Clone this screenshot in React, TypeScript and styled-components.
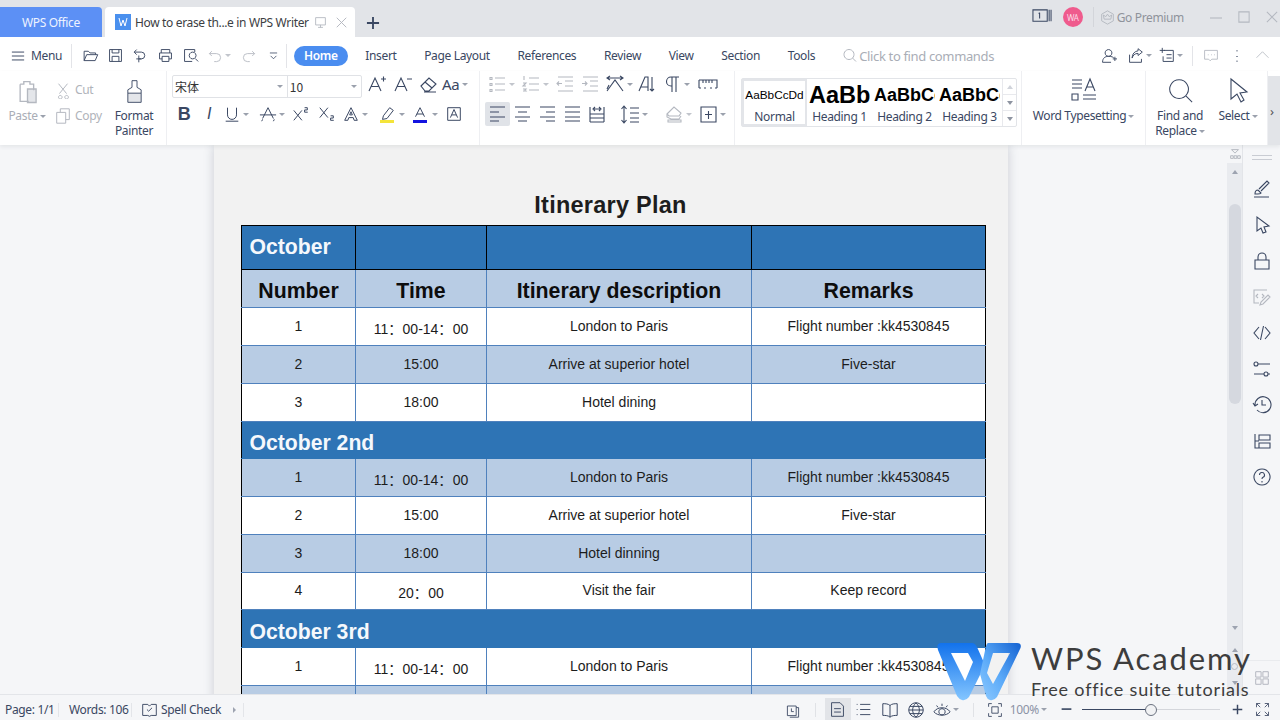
import React from "react";
import styled, { createGlobalStyle } from "styled-components";

const UI = `"Noto Sans", "Open Sans", sans-serif`;
const CJK = `"Noto Sans CJK SC", "Noto Sans", sans-serif`;
const NAVY = "#3a4762";
const MUTED = "#b4b8c0";

const GlobalStyle = createGlobalStyle`
  html, body { margin: 0; padding: 0; height: 100%; overflow: hidden; background: #f5f6f8; }
  #root { height: 100%; }
`;

const Shell = styled.div`
  position: relative;
  width: 1280px;
  height: 720px;
  overflow: hidden;
  display: flex;
  flex-direction: column;
  font: 12px ${UI};
  letter-spacing: -0.35px;
  color: ${NAVY};
`;

/* ---------- icons ---------- */

const Glyph = styled.svg<{ $muted?: boolean; $w: number; $h: number; $sw?: number }>`
  width: ${(p) => p.$w}px;
  height: ${(p) => p.$h}px;
  flex: none;
  fill: none;
  stroke: ${(p) => (p.$muted ? MUTED : NAVY)};
  stroke-width: ${(p) => p.$sw ?? 1.1};
`;

const Ico = ({ d, size = 20, box = 20, muted, sw, tint }: { d: string; size?: number; box?: number; muted?: boolean; sw?: number; tint?: string }) => (
  <Glyph viewBox={`0 0 ${box} ${box}`} $w={size} $h={size} $muted={muted} $sw={sw}>
    {tint && <path d={tint} fill="#e4e6ea" stroke="none" />}
    <path d={d} />
  </Glyph>
);

const Caret = styled.span<{ $light?: boolean; $inline?: boolean }>`
  flex: none;
  display: ${(p) => (p.$inline ? "inline-block" : "block")};
  vertical-align: 2px;
  width: 0;
  height: 0;
  margin-left: 2px;
  border-left: 3px solid transparent;
  border-right: 3px solid transparent;
  border-top: 3px solid ${(p) => (p.$light ? "#c2c5cc" : "#9ba1ad")};
`;

const Spacer = styled.span<{ $w: number }>`
  flex: none;
  width: ${(p) => p.$w}px;
`;

const P = {
  menu: "M1 3.500h14M1 8h14M1 12.500h14",
  open: "M2.500 16V5h5l2 2h6.500v2M2.500 16h13l3-7h-13z",
  save: "M3 3h14v14H3zM6 3v4h8V3M6 17v-6h8v6",
  send: "M3 6h8a4 4 0 0 1 0 8H8M5.500 3 2.500 6l3 3M8 10v8M5 14h6",
  print: "M5 7V3h10v4M6 14H3V7h14v7h-3M6 11h8v6H6z",
  preview: "M15 6V3H3v14h9M12.500 6a4 4 0 1 0 .01 0M15.500 13.500 19 17",
  undo: "M6 4 3 7l3 3M3 7h9a5 5 0 0 1 0 10H9",
  redo: "M14 4l3 3-3 3M17 7H8a5 5 0 0 0 0 10h3",
  qat: "M4 5.500h10M5 9.500l4 4 4-4",
  paste: "M5 5h3V3h5v2h3v5M5 5v14h7M11 9h7v11h-7z",
  cut: "M5 3l9 11M15 3 6 14M7 16a2 2 0 1 1-.01 0M14 16a2 2 0 1 1-.01 0",
  copy: "M7 6V2h10v12h-4M3 6h10v12H3z",
  brush: "M12 2h6v8l5 3v4H7v-4l5-3zM7 17v11h16V17",
  grow: "M2 17 8 4l6 13M4.500 12.500h7M14 5h5M16.500 2.500v5",
  shrink: "M2 17 8 4l6 13M4.500 12.500h7M14 5h5",
  eraser: "M3 12 11 4l7 6-7 7H7zM7 8l7 6M6 18h12",
  underline: "M5 3v8a5 5 0 0 0 10 0V3M3 18h14",
  strike: "M4 15 10 3l6 12M1 11h18M3 18l1-2M16 18l1-2",
  sup: "M2 6l9 11M11 6l-9 11M14 3h3v2.500h-3V8h3.500",
  sub: "M2 3l9 11M11 3l-9 11M14 12h3v2.500h-3V17h3.500",
  outline: "M3 17 10 3l7 14h-3.500l-1-3h-5l-1 3zM8.500 11h3L10 7.500z",
  highlight: "M6 12 13 3l4 3-7 9-5 1z",
  fontColor: "M5 13 10 3l5 10M6.500 10h7",
  boxA: "M3 3h14v14H3zM6 14l4-9 4 9M7.500 11h5",
  bullets: "M8 4h10M8 10h10M8 16h10M3 3.500h2v2H3zM3 9.500h2v2H3zM3 15.500h2v2H3z",
  numbers: "M8 4h10M8 10h10M8 16h10M3 2v4M2 9h3l-3 3h3M2 15h3l-1 1 1 1H2",
  outdent: "M3 3h15M10 7h8M10 12h8M3 17h15M7 9.500H2M4 7.500l-2 2 2 2",
  indent: "M3 3h15M10 7h8M10 12h8M3 17h15M2 9.500h5M5 7.500l2 2-2 2",
  asian: "M2 17 10 6l8 11M4 11l-2 4M2 4h16M5 2 2 4l3 2M15 2l3 2-3 2",
  sort: "M2 17 8 3h3v14M4 13h7M15 3v14M13 15l2 2 2-2",
  pilcrow: "M14 3v15M10 3v15M17 3H9a4 4 0 0 0 0 9h1",
  ruler: "M1 6h18v8M1 6v8M1 14h2M6 14h2M12 14h2M17 14h2M5 6v3M8 6v3M11 6v3M14 6v3",
  alignL: "M3 3h15M3 8h9M3 13h15M3 17h9",
  alignC: "M3 3h15M6 8h9M3 13h15M6 17h9",
  alignR: "M3 3h15M9 8h9M3 13h15M9 17h9",
  justify: "M3 3h15M3 8h15M3 13h15M3 17h15",
  distribute: "M3 3v15M17 3v15M3 10h14M3 14h14M3 18h14M7 5h6M8 3 6 5l2 2M12 3l2 2-2 2",
  spacing: "M10 4h9M10 9h9M10 14h9M10 18h9M4 2v17M1.500 5 4 2l2.500 3M1.500 16 4 19l2.500-3",
  shading: "M3 10 10 3l7 6-2 3H5zM3 10v3l4 2h8l2-3M4 16h13v2H4z",
  borders: "M3 3h15v15H3zM10.500 7v8M7 10.500h7",
  typeset: "M2 3h10M2 7h10M2 11h10M15 14l5-12 5 12M16.500 10h7M2 17h6v6H2zM13 18h13M13 22h13",
  find: "M14 3a10 10 0 1 0 .01 0M21 20l7 7",
  pointer: "M7 2v20l6-5 4 8 3-2-4-7 7-1z",
  person: "M10 3a4 4 0 1 0 .01 0M3 18c0-5 3-7 7-7s6 1 6 2M3 18h10M15 14h5M17.500 11.500v5",
  share: "M3 9v9h14v-4M13 2l5 4-5 4V7.500C9 7.500 7 10 6 13c0-5 3-8 7-8.500z",
  addNote: "M7 4h11v13H6v-6M2 4h6M5 1v6M10 9h6M10 13h6",
  chat: "M2 3h16v11h-7l-2 2-2-2H2zM6 8.500h1M10 8.500h1M14 8.500h1",
  dots: "M10 3v1M10 10v1M10 16v1",
  up: "M2 13 10 5l8 8",
  minWin: "M1 8h12",
  maxWin: "M2 2h11v11H2z",
  close: "M2 2l11 11M13 2 2 13",
  plus: "M7.500 1v13M1 7.500h13",
  monitor: "M2 2h12v9H2zM8 11v3M5 14h6",
  premium: "M9 1l7 4v8l-7 4-7-4V5zM5 11h8l1-5-3 2-2-3-2 3-3-2z",
  counter: "M1 3h15v12H1zM8 6v6M7 7l1-1M18 3v12M20 3v12",
  pen: "M2 18h15M3 15c0-2 1-4 3-4l3 3c0 1-3 1-6 1zM7 10l8-8 2 2-8 8",
  cursor: "M5 2v14l4-3 2 5 3-1-2-5 5-1z",
  lock: "M3 9h14v9H3zM6 9V6a4 4 0 0 1 8 0v3",
  code: "M7 4 2 10l5 6M13 4l5 6-5 6M11.500 3l-3 14",
  edit: "M15 3H2v13h5M6 7 4 9l2 2M10 7l2 2-2 2M8 18l1-3 7-7 2 2-7 7z",
  sliders: "M2 5a2 2 0 1 0 4 0 2 2 0 1 0-4 0M6 5h12M2 15h10M12 15a2 2 0 1 0 4 0 2 2 0 1 0-4 0M16 15h2",
  history: "M3 10a8 8 0 1 1 2 5M1 8l2 3 3-2M10 5v5h4",
  outline2: "M3 3v14h4M3 10h4M7 4h11v5H7zM7 12h11v5H7z",
  help: "M10 2a8 8 0 1 0 .01 0M7.500 8a2.500 2.500 0 1 1 3.500 2.300c-.7.3-1 .7-1 1.700M10 14v1.500",
  grid: "M3 3h6v6H3zM11 3h6v6h-6zM3 11h6v6H3zM11 11h6v6h-6z",
  spell: "M2 4h6l2 2 2-2h6v13h-6l-2 1-2-1H2zM7 10l2 2 4-4",
  clock: "M3 5h11v12H3zM14 7h3v12H6M8 8v4h3",
  pageView: "M3 2h10l4 4v12H3zM6 9h8M6 13h8",
  listView: "M6 4h12M6 10h12M6 16h12M2 4h1M2 10h1M2 16h1",
  book: "M10 5c-2-2-5-2-8-2v13c3 0 6 0 8 2 2-2 5-2 8-2V3c-3 0-6 0-8 2zM10 5v13",
  globe: "M10 2a8 8 0 1 0 .01 0M2 10h16M3 6h14M3 14h14M10 2c-5 5-5 11 0 16M10 2c5 5 5 11 0 16",
  eye: "M1 12c4-6 14-6 18 0-4 5-14 5-18 0zM10 8.500a3.500 3.500 0 1 0 .01 0M4 5l1.500 2M10 3v2.500M16 5l-1.500 2",
  fit: "M2 6V2h4M14 2h4v4M18 14v4h-4M6 18H2v-4M6 6h8v8H6z",
  minus: "M2 7.500h12",
  full: "M2 7V2h5M2 2l5 5M13 2h5v5M18 2l-5 5M18 13v5h-5M18 18l-5-5M7 18H2v-5M2 18l5-5",
  rulerToggle: "M4 3h8L8 7zM3 10h3v3H3zM7 10h3v3H7zM11 10h3v3h-3z",
};

/* ---------- title bar ---------- */

const TitleBar = styled.header`
  height: 37px;
  flex: none;
  background: #e2e4e8;
  display: flex;
  align-items: flex-end;
`;

const HomeTab = styled.div`
  width: 102px;
  height: 30px;
  background: #5c90f5;
  border-radius: 0 4px 0 0;
  color: #eef3ff;
  display: flex;
  align-items: center;
  justify-content: center;
`;

const DocTab = styled.div`
  width: 250px;
  height: 30px;
  margin-left: 3px;
  padding: 0 10px;
  box-sizing: border-box;
  background: #fff;
  border-radius: 4px 4px 0 0;
  display: flex;
  align-items: center;
  color: #3c4043;
`;

const DocBadge = styled.svg`
  width: 16px;
  height: 16px;
  flex: none;
`;

const DocTitle = styled.span`
  margin: 0 5px 0 4px;
  white-space: nowrap;
`;

const NewTab = styled.div`
  margin: 0 0 7px 11px;
  display: flex;
`;

const TitleRight = styled.div`
  margin: 0 0 0 auto;
  height: 37px;
  padding: 0 1px 3px 0;
  box-sizing: border-box;
  display: flex;
  align-items: center;
`;

const Avatar = styled.div`
  width: 20px;
  height: 20px;
  margin: 0 10px 0 11px;
  border-radius: 50%;
  background: #ef5b8d;
  color: #fbdce6;
  font-size: 8px;
  display: flex;
  align-items: center;
  justify-content: center;
`;

const Premium = styled.div`
  border-left: 1px solid #d3d5da;
  height: 20px;
  padding-left: 6px;
  display: flex;
  align-items: center;
  gap: 2px;
  color: #8f939b;
  margin-right: 25px;
`;

const WinButtons = styled.div`
  display: flex;
  gap: 14px;
`;

/* ---------- menu row ---------- */

const MenuRow = styled.nav`
  height: 34px;
  flex: none;
  padding-top: 3px;
  box-sizing: border-box;
  background: #fff;
  display: flex;
  align-items: center;
`;

const MenuButton = styled.div`
  width: 72px;
  height: 24px;
  padding-left: 11px;
  box-sizing: border-box;
  border-right: 1px solid #e3e4e8;
  display: flex;
  align-items: center;
  gap: 6px;
`;

const Quick = styled.div`
  width: 215px;
  height: 24px;
  padding-left: 10px;
  box-sizing: border-box;
  border-right: 1px solid #e3e4e8;
  display: flex;
  align-items: center;
`;

const QuickSlot = styled.div<{ $w: number }>`
  width: ${(p) => p.$w}px;
  display: flex;
  align-items: center;
`;

const RibbonTabs = styled.div`
  margin-left: 7px;
  display: flex;
  align-items: center;
  gap: 27.7px;
`;

const RibbonTab = styled.div<{ $active?: boolean }>`
  height: 20px;
  line-height: 20px;
  white-space: nowrap;
  ${(p) =>
    p.$active &&
    `padding: 0 10px;
     margin-right: -10px;
     border-radius: 10px;
     background: #4a8df0;
     color: #fff;
     font-weight: 600;`}
`;

const FindCommands = styled.div`
  margin-left: 27px;
  display: flex;
  align-items: center;
  gap: 2px;
  color: #a9adb6;
  font-size: 13px;
`;

const MenuRight = styled.div`
  margin-left: auto;
  padding-right: 10px;
  display: flex;
  align-items: center;
`;

const MenuDivider = styled.div`
  width: 1px;
  height: 20px;
  background: #e3e4e8;
  margin: 0 10px 0 9px;
`;

/* ---------- ribbon ---------- */

const Ribbon = styled.section`
  height: 74px;
  flex: none;
  background: #fff;
  display: flex;
  position: relative;
  z-index: 2;
  box-shadow: 0 2px 4px rgba(40, 50, 70, 0.08);
`;

const Group = styled.div<{ $w: number; $pad?: number }>`
  width: ${(p) => p.$w}px;
  flex: none;
  box-sizing: border-box;
  padding-left: ${(p) => p.$pad ?? 0}px;
  border-right: 1px solid #eeeff2;
  display: flex;
`;

const Big = styled.div<{ $w: number; $muted?: boolean }>`
  width: ${(p) => p.$w}px;
  flex: none;
  padding-top: 5px;
  display: flex;
  flex-direction: column;
  align-items: center;
  color: ${(p) => (p.$muted ? "#a9adb6" : NAVY)};
`;

const BigIcon = styled.div`
  height: 30px;
  display: flex;
  align-items: center;
  margin-bottom: 2px;
`;

const BigLabel = styled.div`
  line-height: 15px;
  text-align: center;
  white-space: nowrap;
`;

const SmallStack = styled.div`
  width: 58px;
  margin-left: 7px;
  padding-top: 9px;
  display: flex;
  flex-direction: column;
  gap: 7px;
  color: #b0b3ba;
`;

const SmallTool = styled.div`
  display: flex;
  align-items: center;
  gap: 3px;
  height: 19px;
`;

const Rows = styled.div`
  display: flex;
  flex-direction: column;
`;

const ToolRow = styled.div<{ $second?: boolean }>`
  height: 26px;
  margin-top: ${(p) => (p.$second ? 4 : 0)}px;
  display: flex;
  align-items: center;
`;

const Tool = styled.div<{ $w: number; $active?: boolean }>`
  width: ${(p) => p.$w}px;
  height: 24px;
  flex: none;
  padding-left: 2px;
  box-sizing: border-box;
  border-radius: 2px;
  background: ${(p) => (p.$active ? "#e0e3e8" : "transparent")};
  display: flex;
  align-items: center;
`;

const FontBox = styled.div`
  margin: 4px 3px 0 0;
  width: 190px;
  height: 23px;
  border: 1px solid #e0e2e6;
  border-radius: 2px;
  box-sizing: border-box;
  display: flex;
  font-family: ${CJK};
  letter-spacing: 0;
  color: #333;
`;

const FontField = styled.div<{ $w: number }>`
  width: ${(p) => p.$w}px;
  box-sizing: border-box;
  padding: 0 4px 0 2px;
  display: flex;
  align-items: center;
  justify-content: space-between;
  & + & { border-left: 1px solid #e0e2e6; }
`;

const BoldGlyph = styled.span<{ $italic?: boolean }>`
  width: 20px;
  text-align: center;
  font: ${(p) => (p.$italic ? "italic 400 16px" : "700 18px")} "Liberation Sans", sans-serif;
  line-height: 20px;
`;

const CaseGlyph = styled.span`
  font-size: 15px;
  line-height: 20px;
  margin-right: 1px;
`;

const BarIcon = styled.div<{ $color: string }>`
  display: flex;
  flex-direction: column;
  align-items: center;
  width: 20px;
  &::after {
    content: "";
    width: 14px;
    height: 3px;
    margin-top: -3px;
    background: ${(p) => p.$color};
  }
`;

const Gallery = styled.div`
  margin-top: 7px;
  width: 276px;
  height: 49px;
  box-sizing: border-box;
  border: 1px solid #e2e4e8;
  border-radius: 2px;
  display: flex;
`;

const StyleCard = styled.div<{ $selected?: boolean }>`
  width: 65px;
  flex: none;
  box-sizing: border-box;
  border: 2px solid ${(p) => (p.$selected ? "#e3e5e9" : "transparent")};
  display: flex;
  flex-direction: column;
  align-items: center;
  overflow: hidden;
`;

const StylePreview = styled.div<{ $size: number; $bold?: boolean }>`
  width: 100%;
  height: 28px;
  line-height: 28px;
  text-align: center;
  overflow: hidden;
  white-space: nowrap;
  letter-spacing: 0;
  color: #000;
  font-family: "Liberation Sans", sans-serif;
  font-size: ${(p) => p.$size}px;
  font-weight: ${(p) => (p.$bold ? 700 : 400)};
`;

const StyleName = styled.div`
  line-height: 15px;
`;

const GalleryArrows = styled.div`
  width: 15px;
  margin-left: auto;
  border-left: 1px solid #e8e9ed;
  display: flex;
  flex-direction: column;
`;

const GalleryArrow = styled.div<{ $up?: boolean; $light?: boolean }>`
  flex: 1;
  display: flex;
  align-items: center;
  justify-content: center;
  & + & { border-top: 1px solid #e8e9ed; }
  &::after {
    content: "";
    border-left: 3px solid transparent;
    border-right: 3px solid transparent;
    ${(p) => (p.$up ? "border-bottom" : "border-top")}: 4px solid ${(p) => (p.$light ? "#d0d3da" : "#8e94a1")};
  }
`;

const Collapse = styled.div`
  flex: 1;
  margin-top: 5px;
  background: #e2e4e8;
  display: flex;
  align-items: center;
  padding-left: 2px;
  color: #555;
  font-size: 13px;
`;

/* ---------- document ---------- */

const Workspace = styled.main`
  flex: 1;
  min-height: 0;
  display: flex;
  background: #f5f6f8;
`;

const Canvas = styled.div`
  width: 1227px;
  flex: none;
  padding-left: 214px;
  box-sizing: border-box;
  overflow: hidden;
`;

const Page = styled.article`
  width: 794px;
  min-height: 700px;
  box-sizing: border-box;
  padding: 47px 22px 0 27px;
  background: #f2f2f2;
  box-shadow: 0 0 10px rgba(60, 70, 90, 0.22);
`;

const DocHeading = styled.h1`
  margin: 0 0 6px;
  padding-right: 6px;
  height: 27px;
  text-align: center;
  font: 700 23.500px/27px "Liberation Sans", sans-serif;
  color: #1d1d1d;
  letter-spacing: 0.25px;
`;

const Sheet = styled.table`
  width: 744px;
  table-layout: fixed;
  border-collapse: collapse;
  font-family: "Liberation Sans", sans-serif;
  letter-spacing: 0;
  color: #1c1c1c;
`;

const Row = styled.tr<{ $h: number }>`
  height: ${(p) => p.$h}px;
`;

const Cell = styled.td<{ $band?: boolean; $low?: boolean }>`
  padding: ${(p) => (p.$low ? "4px 0 0" : "0 0 2px")};
  box-sizing: border-box;
  text-align: center;
  font-size: 14px;
  line-height: 16px;
  background: ${(p) => (p.$band ? "#b8cce4" : "#fff")};
  border: 1px solid #4f81bd;
  white-space: nowrap;
  &:first-child { border-left: 1.500px solid #000; }
  &:last-child { border-right: 1.500px solid #000; }
`;

const HeadCell = styled.th`
  padding: 5px 0 0;
  text-align: center;
  font-size: 21.300px;
  line-height: 24px;
  font-weight: 700;
  color: #0d0d0d;
  background: #b8cce4;
  border: 1px solid #4f81bd;
  &:first-child { border-left: 1.500px solid #000; }
  &:last-child { border-right: 1.500px solid #000; }
`;

const MonthCell = styled.td<{ $framed?: boolean }>`
  padding: ${(p) => (p.$framed ? "0 0 2px 7.500px" : "6px 0 0 7.500px")};
  font-size: 21.200px;
  line-height: 24px;
  font-weight: 700;
  color: #f5f8fc;
  background: #2e74b5;
  border: 1px solid ${(p) => (p.$framed ? "#000" : "#2e74b5")};
  &:first-child { border-left: 1.500px solid #000; }
  &:last-child { border-right: 1.500px solid #000; }
`;

const TimeText = styled.span`
  font-family: "Liberation Sans", ${CJK};
  word-spacing: -3.500px;
`;

/* ---------- scrollbar + side rail ---------- */

const Scrollbar = styled.div`
  width: 15px;
  flex: none;
  display: flex;
  flex-direction: column;
  align-items: center;
`;

const RulerToggle = styled.div`
  height: 18px;
  display: flex;
  align-items: center;
  justify-content: center;
  width: 100%;
  background: #f5f6f8;
`;

const Track = styled.div`
  flex: 1;
  width: 100%;
  background: #e9ebef;
  display: flex;
  flex-direction: column;
  align-items: center;
`;

const Thumb = styled.div`
  width: 12px;
  height: 200px;
  margin-top: 30px;
  border-radius: 6px;
  background: #d5d8df;
`;

const Tri = styled.div<{ $up?: boolean }>`
  margin-top: ${(p) => (p.$up ? 7 : 0)}px;
  border-left: 3px solid transparent;
  border-right: 3px solid transparent;
  ${(p) => (p.$up ? "border-bottom" : "border-top")}: 4px solid #9da3b0;
`;

const TrackFoot = styled.div`
  margin-top: auto;
  padding-bottom: 9px;
  display: flex;
  flex-direction: column;
  align-items: center;
  gap: 11px;
`;

const DotButton = styled.div`
  width: 5px;
  height: 5px;
  border: 1px solid #b8bcc6;
  border-radius: 50%;
`;

const SideRail = styled.aside`
  flex: 1;
  border-left: 1px solid #e3e5e9;
  display: flex;
  flex-direction: column;
  align-items: center;
  padding-top: 10px;
  box-sizing: border-box;
`;

const RailGrip = styled.div`
  width: 20px;
  height: 3px;
  border-top: 1px solid #c9ccd3;
  border-bottom: 1px solid #c9ccd3;
  margin-bottom: 19px;
`;

const RailIcons = styled.div`
  display: flex;
  flex-direction: column;
  gap: 16px;
`;

const RailFoot = styled.div`
  margin-top: auto;
  margin-bottom: 7px;
  padding-top: 8px;
  border-top: 1px solid #e9ebee;
  width: 100%;
  display: flex;
  justify-content: center;
`;

/* ---------- status bar ---------- */

const StatusBar = styled.footer`
  height: 26px;
  flex: none;
  padding-top: 4px;
  background: #f5f6f8;
  border-top: 1px solid #e3e5e9;
  box-sizing: border-box;
  display: flex;
  align-items: center;
  position: relative;
  z-index: 2;
`;

const StatusText = styled.div<{ $w: number; $pad?: number }>`
  width: ${(p) => p.$w}px;
  height: 14px;
  line-height: 14px;
  box-sizing: border-box;
  padding-left: ${(p) => p.$pad ?? 5}px;
  border-right: 1px solid #e3e5e9;
  white-space: nowrap;
`;

const SpellCheck = styled.div`
  width: 112px;
  height: 14px;
  padding-left: 9px;
  box-sizing: border-box;
  border-right: 1px solid #e3e5e9;
  display: flex;
  align-items: center;
  gap: 3px;
`;

const MiniArrow = styled.span`
  margin-left: 9px;
  border-top: 3px solid transparent;
  border-bottom: 3px solid transparent;
  border-left: 3px solid #9da3b0;
`;

const StatusRight = styled.div`
  margin-left: auto;
  padding-right: 10px;
  display: flex;
  align-items: center;
`;

const ViewBtn = styled.div<{ $on?: boolean; $w?: number }>`
  width: ${(p) => p.$w ?? 26}px;
  height: 23px;
  display: flex;
  align-items: center;
  justify-content: center;
  background: ${(p) => (p.$on ? "#e2e4e8" : "transparent")};
`;

const StatusDivider = styled.div`
  width: 1px;
  height: 14px;
  background: #e0e2e6;
  margin: 0 9px;
`;

const Zoom = styled.div`
  color: #8b93a5;
  display: flex;
  align-items: center;
  margin: 0 13px 0 2px;
`;

const Slider = styled.div`
  position: relative;
  width: 138px;
  height: 1px;
  margin: 0 12px 0 9px;
  background: linear-gradient(to right, ${NAVY} 50%, #d4d6db 50%);
`;

const SliderKnob = styled.span`
  position: absolute;
  left: 63px;
  top: -5px;
  width: 10px;
  height: 10px;
  border: 1px solid #6b7280;
  border-radius: 50%;
  background: #f1f2f4;
`;

/* ---------- watermark ---------- */

const Watermark = styled.div`
  position: absolute;
  left: 937px;
  top: 643px;
  z-index: 5;
  display: flex;
  pointer-events: none;
`;

const WmText = styled.div`
  margin-left: 10px;
  padding-top: 1px;
  color: #3d3d3d;
  font-family: Lato, sans-serif;
`;

const WmTitle = styled.div`
  font-size: 31px;
  line-height: 28px;
  letter-spacing: 1.900px;
  white-space: nowrap;
`;

const WmSub = styled.div`
  margin-top: 6px;
  font-size: 18px;
  line-height: 22px;
  letter-spacing: 0.820px;
  white-space: nowrap;
`;

/* ---------- data ---------- */

type Plan = [string, string, string, string];

const AM = "11： 00-14： 00";

const FIRST: Plan[] = [
  ["1", AM, "London to Paris", "Flight number :kk4530845"],
  ["2", "15:00", "Arrive at superior hotel", "Five-star"],
  ["3", "18:00", "Hotel dining", ""],
];

const SECOND: Plan[] = [
  ["1", AM, "London to Paris", "Flight number :kk4530845"],
  ["2", "15:00", "Arrive at superior hotel", "Five-star"],
  ["3", "18:00", "Hotel dinning", ""],
  ["4", "20： 00", "Visit the fair", "Keep record"],
];

const THIRD: Plan[] = [
  ["1", AM, "London to Paris", "Flight number :kk4530845"],
  ["2", "15:00", "Arrive at superior hotel", "Five-star"],
];

const PlanRows = ({ plans, firstBand }: { plans: Plan[]; firstBand: boolean }) => (
  <>
    {plans.map((p, i) => {
      const band = (i % 2 === 0) === firstBand;
      return (
        <Row $h={i === 3 ? 37 : 38} key={i}>
          <Cell $band={band}>{p[0]}</Cell>
          <Cell $band={band} $low={p[1].includes("：")}>
            <TimeText>{p[1]}</TimeText>
          </Cell>
          <Cell $band={band}>{p[2]}</Cell>
          <Cell $band={band}>{p[3]}</Cell>
        </Row>
      );
    })}
  </>
);

const MonthRow = ({ label, h }: { label: string; h: number }) => (
  <Row $h={h}>
    <MonthCell colSpan={4}>{label}</MonthCell>
  </Row>
);

const StyleItem = ({ name, size, bold, selected }: { name: string; size: number; bold?: boolean; selected?: boolean }) => (
  <StyleCard $selected={selected}>
    <StylePreview $size={size} $bold={bold}>AaBbCcDd</StylePreview>
    <StyleName>{name}</StyleName>
  </StyleCard>
);

const WpsLogo = () => (
  <svg width="84" height="58" viewBox="0 0 84 58">
    <defs>
      <linearGradient id="wmA" x1="0" y1="0" x2="0" y2="1">
        <stop offset="0" stopColor="#1272ec" />
        <stop offset="1" stopColor="#84c6ff" />
      </linearGradient>
      <linearGradient id="wmB" x1="1" y1="0" x2="0" y2="1">
        <stop offset="0" stopColor="#1462d2" />
        <stop offset="0.55" stopColor="#5aa9f8" />
        <stop offset="1" stopColor="#8fcbff" />
      </linearGradient>
    </defs>
    <path
      fillRule="evenodd"
      fill="url(#wmA)"
      d="M4 0H35Q38 0 40 4L48 22 32 54Q29 58 25 57 22 56 20 53L1 7Q-1 0 4 0ZM14 10H31L36 19 28 38Z"
    />
    <path
      fillRule="evenodd"
      fill="url(#wmB)"
      d="M51 0H80Q85 0 83.500 5L60 54Q57 58 53 57 50 56 49 53L43 31 49 3Q50 0 51 0ZM56 10H73L56 41 50 30Z"
    />
  </svg>
);

const App: React.FC = () => (
  <Shell>
    <GlobalStyle />

    <TitleBar>
      <HomeTab>WPS Office</HomeTab>
      <DocTab>
        <DocBadge viewBox="0 0 16 16">
          <rect width="16" height="16" fill="#4a90ee" />
          <path d="M4 4l2 8 2-6 2 6 2-8" fill="none" stroke="#fff" strokeWidth="1" />
        </DocBadge>
        <DocTitle>How to erase th...e in WPS Writer</DocTitle>
        <Ico d={P.monitor} size={13} box={16} muted />
        <Spacer $w={8} />
        <Ico d={P.close} size={13} box={15} muted />
      </DocTab>
      <NewTab>
        <Ico d={P.plus} size={14} box={15} sw={2} />
      </NewTab>
      <TitleRight>
        <Ico d={P.counter} size={20} box={21} />
        <Avatar>WA</Avatar>
        <Premium>
          <Ico d={P.premium} size={15} box={18} muted />
          Go Premium
        </Premium>
        <WinButtons>
          <Ico d={P.minWin} size={14} box={14} muted />
          <Ico d={P.maxWin} size={14} box={15} muted />
          <Ico d={P.close} size={14} box={15} muted />
        </WinButtons>
      </TitleRight>
    </TitleBar>

    <MenuRow>
      <MenuButton>
        <Ico d={P.menu} size={14} box={16} />
        Menu
      </MenuButton>
      <Quick>
        <QuickSlot $w={25}><Ico d={P.open} size={17} /></QuickSlot>
        <QuickSlot $w={25}><Ico d={P.save} size={17} /></QuickSlot>
        <QuickSlot $w={25}><Ico d={P.send} size={17} /></QuickSlot>
        <QuickSlot $w={25}><Ico d={P.print} size={17} /></QuickSlot>
        <QuickSlot $w={25}><Ico d={P.preview} size={17} /></QuickSlot>
        <QuickSlot $w={34}><Ico d={P.undo} size={16} muted /><Caret $light /></QuickSlot>
        <QuickSlot $w={26}><Ico d={P.redo} size={16} muted /></QuickSlot>
        <QuickSlot $w={16}><Ico d={P.qat} size={13} box={18} /></QuickSlot>
      </Quick>
      <RibbonTabs>
        <RibbonTab $active>Home</RibbonTab>
        <RibbonTab>Insert</RibbonTab>
        <RibbonTab>Page Layout</RibbonTab>
        <RibbonTab>References</RibbonTab>
        <RibbonTab>Review</RibbonTab>
        <RibbonTab>View</RibbonTab>
        <RibbonTab>Section</RibbonTab>
        <RibbonTab>Tools</RibbonTab>
      </RibbonTabs>
      <FindCommands>
        <Ico d={P.find} size={15} box={30} muted sw={2} />
        Click to find commands
      </FindCommands>
      <MenuRight>
        <Ico d={P.person} size={17} />
        <Spacer $w={10} />
        <Ico d={P.share} size={17} />
        <Caret />
        <Spacer $w={6} />
        <Ico d={P.addNote} size={17} />
        <Caret />
        <MenuDivider />
        <Ico d={P.chat} size={16} muted />
        <Spacer $w={10} />
        <Ico d={P.dots} size={16} sw={2} />
        <Spacer $w={10} />
        <Ico d={P.up} size={15} muted />
      </MenuRight>
    </MenuRow>

    <Ribbon>
      <Group $w={167} $pad={7}>
        <Big $w={40} $muted>
          <BigIcon><Ico d={P.paste} tint="M11 9h7v11h-7z" size={27} box={22} muted /></BigIcon>
          <BigLabel>Paste<Caret $inline /></BigLabel>
        </Big>
        <SmallStack>
          <SmallTool><Ico d={P.cut} size={18} muted />Cut</SmallTool>
          <SmallTool><Ico d={P.copy} size={18} muted />Copy</SmallTool>
        </SmallStack>
        <Big $w={44}>
          <BigIcon><Ico d={P.brush} tint="M7 17h16v11H7z" size={25} box={30} /></BigIcon>
          <BigLabel>Format<br />Painter</BigLabel>
        </Big>
      </Group>

      <Group $w={313} $pad={5}>
        <Rows>
          <ToolRow>
            <FontBox>
              <FontField $w={115}>宋体<Caret /></FontField>
              <FontField $w={75}>10<Caret /></FontField>
            </FontBox>
            <Tool $w={26}><Ico d={P.grow} /></Tool>
            <Tool $w={25}><Ico d={P.shrink} /></Tool>
            <Tool $w={24}><Ico d={P.eraser} /></Tool>
            <Tool $w={30}><CaseGlyph>Aa</CaseGlyph><Caret /></Tool>
          </ToolRow>
          <ToolRow $second>
            <Tool $w={25}><BoldGlyph>B</BoldGlyph></Tool>
            <Tool $w={24}><BoldGlyph $italic>I</BoldGlyph></Tool>
            <Tool $w={36}><Ico d={P.underline} size={18} /><Caret /></Tool>
            <Tool $w={33}><Ico d={P.strike} size={18} /><Caret /></Tool>
            <Tool $w={26}><Ico d={P.sup} size={18} /></Tool>
            <Tool $w={24}><Ico d={P.sub} size={18} /></Tool>
            <Tool $w={35}><Ico d={P.outline} size={18} /><Caret /></Tool>
            <Tool $w={33}>
              <BarIcon $color="#f4e43a"><Ico d={P.highlight} size={18} /></BarIcon><Caret />
            </Tool>
            <Tool $w={35}>
              <BarIcon $color="#1414e0"><Ico d={P.fontColor} size={18} /></BarIcon><Caret />
            </Tool>
            <Tool $w={24}><Ico d={P.boxA} size={18} /></Tool>
          </ToolRow>
        </Rows>
      </Group>

      <Group $w={255} $pad={5}>
        <Rows>
          <ToolRow>
            <Tool $w={34}><Ico d={P.bullets} muted /><Caret $light /></Tool>
            <Tool $w={34}><Ico d={P.numbers} muted /><Caret $light /></Tool>
            <Tool $w={25}><Ico d={P.outdent} muted /></Tool>
            <Tool $w={25}><Ico d={P.indent} muted /></Tool>
            <Tool $w={32}><Ico d={P.asian} /><Caret /></Tool>
            <Tool $w={25}><Ico d={P.sort} /></Tool>
            <Tool $w={36}><Ico d={P.pilcrow} /><Caret /></Tool>
            <Tool $w={25}><Ico d={P.ruler} /></Tool>
          </ToolRow>
          <ToolRow $second>
            <Tool $w={25} $active><Ico d={P.alignL} /></Tool>
            <Tool $w={25}><Ico d={P.alignC} /></Tool>
            <Tool $w={25}><Ico d={P.alignR} /></Tool>
            <Tool $w={25}><Ico d={P.justify} /></Tool>
            <Tool $w={33}><Ico d={P.distribute} /></Tool>
            <Tool $w={44}><Ico d={P.spacing} /><Caret /></Tool>
            <Tool $w={34}><Ico d={P.shading} muted /><Caret $light /></Tool>
            <Tool $w={30}><Ico d={P.borders} /><Caret /></Tool>
          </ToolRow>
        </Rows>
      </Group>

      <Group $w={287} $pad={6}>
        <Gallery>
          <StyleItem name="Normal" size={11.8} selected />
          <StyleItem name="Heading 1" size={23.5} bold />
          <StyleItem name="Heading 2" size={18} bold />
          <StyleItem name="Heading 3" size={18} bold />
          <GalleryArrows>
            <GalleryArrow $up $light />
            <GalleryArrow />
            <GalleryArrow />
          </GalleryArrows>
        </Gallery>
      </Group>

      <Group $w={124}>
        <Big $w={123}>
          <BigIcon><Ico d={P.typeset} size={28} box={28} /></BigIcon>
          <BigLabel>Word Typesetting<Caret $inline /></BigLabel>
        </Big>
      </Group>

      <Group $w={122} $pad={4}>
        <Big $w={60}>
          <BigIcon><Ico d={P.find} size={28} box={30} /></BigIcon>
          <BigLabel>Find and<br />Replace<Caret $inline /></BigLabel>
        </Big>
        <Big $w={56}>
          <BigIcon><Ico d={P.pointer} size={28} box={28} /></BigIcon>
          <BigLabel>Select<Caret $inline /></BigLabel>
        </Big>
      </Group>

      <Collapse>›</Collapse>
    </Ribbon>

    <Workspace>
      <Canvas>
        <Page>
          <DocHeading>Itinerary Plan</DocHeading>
          <Sheet>
            <colgroup>
              <col width={114} />
              <col width={131} />
              <col width={265} />
              <col width={234} />
            </colgroup>
            <tbody>
              <Row $h={44}>
                <MonthCell $framed>October</MonthCell>
                <MonthCell $framed />
                <MonthCell $framed />
                <MonthCell $framed />
              </Row>
              <Row $h={38}>
                <HeadCell>Number</HeadCell>
                <HeadCell>Time</HeadCell>
                <HeadCell>Itinerary description</HeadCell>
                <HeadCell>Remarks</HeadCell>
              </Row>
              <PlanRows plans={FIRST} firstBand={false} />
              <MonthRow label="October 2nd" h={37} />
              <PlanRows plans={SECOND} firstBand />
              <MonthRow label="October 3rd" h={38} />
              <PlanRows plans={THIRD} firstBand={false} />
            </tbody>
          </Sheet>
        </Page>
      </Canvas>

      <Scrollbar>
        <RulerToggle><Ico d={P.rulerToggle} size={14} box={16} muted /></RulerToggle>
        <Track>
          <Tri $up />
          <Thumb />
          <TrackFoot>
            <Tri />
            <Tri $up />
            <DotButton />
            <Tri />
          </TrackFoot>
        </Track>
      </Scrollbar>

      <SideRail>
        <RailGrip />
        <RailIcons>
          <Ico d={P.pen} />
          <Ico d={P.cursor} />
          <Ico d={P.lock} />
          <Ico d={P.edit} muted />
          <Ico d={P.code} />
          <Ico d={P.sliders} />
          <Ico d={P.history} />
          <Ico d={P.outline2} />
          <Ico d={P.help} />
        </RailIcons>
        <RailFoot><Ico d={P.grid} size={18} muted /></RailFoot>
      </SideRail>
    </Workspace>

    <StatusBar>
      <StatusText $w={59}>Page: 1/1</StatusText>
      <StatusText $w={73} $pad={10}>Words: 106</StatusText>
      <SpellCheck>
        <Ico d={P.spell} size={17} />
        Spell Check
        <MiniArrow />
      </SpellCheck>
      <StatusRight>
        <ViewBtn $w={25}><Ico d={P.clock} size={16} /></ViewBtn>
        <StatusDivider />
        <ViewBtn $on><Ico d={P.pageView} size={17} /></ViewBtn>
        <ViewBtn><Ico d={P.listView} size={17} /></ViewBtn>
        <ViewBtn><Ico d={P.book} size={18} /></ViewBtn>
        <ViewBtn><Ico d={P.globe} size={18} /></ViewBtn>
        <ViewBtn $w={35}><Ico d={P.eye} size={18} /><Caret /></ViewBtn>
        <StatusDivider />
        <ViewBtn $w={25}><Ico d={P.fit} size={16} /></ViewBtn>
        <Zoom>100%<Caret /></Zoom>
        <Ico d={P.minus} size={13} box={16} sw={2} />
        <Slider><SliderKnob /></Slider>
        <Ico d={P.plus} size={11} box={15} sw={2} />
        <Spacer $w={12} />
        <Ico d={P.full} size={15} />
      </StatusRight>
    </StatusBar>

    <Watermark>
      <WpsLogo />
      <WmText>
        <WmTitle>WPS Academy</WmTitle>
        <WmSub>Free office suite tutorials</WmSub>
      </WmText>
    </Watermark>
  </Shell>
);

export default App;
